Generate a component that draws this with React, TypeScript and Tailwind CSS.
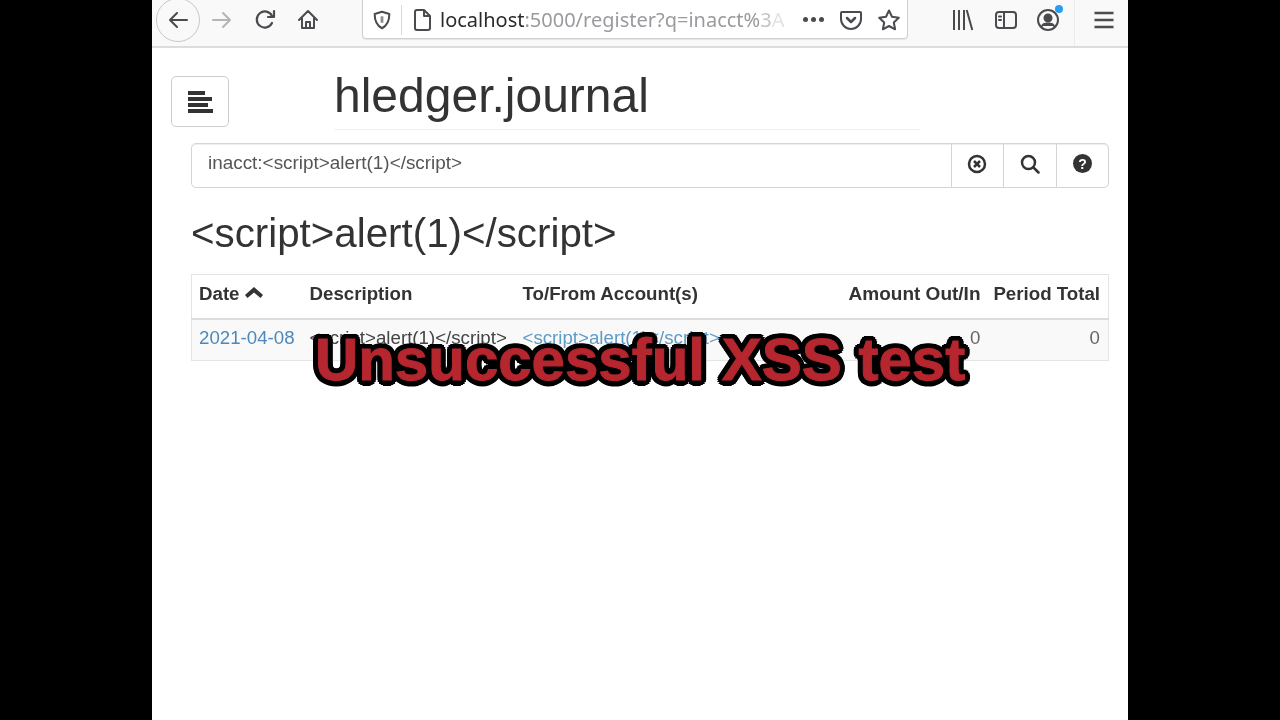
const sans = "font-['Liberation_Sans',Arial,sans-serif]";

function ToolIcon({ children, className = "" }: { children: React.ReactNode; className?: string }) {
  return (
    <svg viewBox="0 0 24 24" fill="none" stroke="currentColor" strokeWidth="2" strokeLinecap="round" strokeLinejoin="round" className={`h-6 w-6 text-[#4a4a4f] ${className}`}>
      {children}
    </svg>
  );
}

function BrowserBar() {
  return (
    <header className="flex h-12 items-start overflow-hidden border-b-2 border-[#dcdcdc] bg-[#f9f9fa]">
      {/* nav buttons */}
      <div className="ml-[4px] mt-[-2px] flex h-[44px] w-[44px] items-center justify-center rounded-full border border-[#c8c8c8]">
        <ToolIcon>
          <path d="M21 12H4M11 5l-7 7 7 7" />
        </ToolIcon>
      </div>
      <div className="ml-[10px] mt-2">
        <ToolIcon className="text-[#b5b5b8]">
          <path d="M3 12h17M13 5l7 7-7 7" />
        </ToolIcon>
      </div>
      <div className="ml-[19px] mt-2">
        <svg viewBox="0 0 24 24" fill="none" stroke="currentColor" strokeWidth="2.2" strokeLinecap="round" strokeLinejoin="round" className="h-6 w-6 text-[#4a4a4f]">
          <path d="M19 15a8 8 0 1 1 0-7" />
          <path d="M21 3v6h-6" />
        </svg>
      </div>
      <div className="ml-[19px] mt-2">
        <ToolIcon>
          <path d="M3 12l9-9 9 9M6 10v10h12V10M10 20v-6h4v6" />
        </ToolIcon>
      </div>
      {/* url bar */}
      <div className="ml-[42px] mt-[-4px] flex h-[43px] w-[546px] items-center rounded-[4px] border border-[#cfcfcf] bg-white pt-1 shadow-[0_1px_1px_rgba(0,0,0,0.08)]">
        <svg viewBox="0 0 24 24" fill="none" stroke="currentColor" strokeWidth="2.2" strokeLinejoin="round" className="ml-[8px] h-[22px] w-[22px] text-[#4a4a4f]">
          <path d="M12 3l8 2.5c0 7-2 12.5-8 15.5-6-3-8-8.500-8-15.500z" />
          <path d="M12 8v7" strokeWidth="3" className="text-[#8a8a8a]" />
        </svg>
        <div className="ml-[8px] h-[30px] w-px bg-[#d8d8d8]" />
        <svg viewBox="0 0 24 24" fill="none" stroke="currentColor" strokeWidth="2" strokeLinejoin="round" className="ml-[8px] h-6 w-6 text-[#4a4a4f]">
          <path d="M5 4a2 2 0 0 1 2-2h7l6 6v12a2 2 0 0 1-2 2H7a2 2 0 0 1-2-2z" />
          <path d="M14 2v6h6" />
        </svg>
        <div className="ml-[6px] w-[349px] whitespace-nowrap font-['Noto_Sans',sans-serif] text-[20px] leading-6">
          <span className="text-[#2a2a2e]">localhost</span>
          <span className="text-[#9a9a9f]">:5000/register?q=inacct%</span>
          <span className="text-[#c4c4c8]">3</span>
          <span className="text-[#e2e2e4]">A</span>
        </div>
        <div className="ml-[14px] flex gap-[3px]">
          <span className="h-[5px] w-[5px] rounded-full bg-[#4a4a4f]" />
          <span className="h-[5px] w-[5px] rounded-full bg-[#4a4a4f]" />
          <span className="h-[5px] w-[5px] rounded-full bg-[#4a4a4f]" />
        </div>
        <div className="ml-[15px]">
          <ToolIcon>
            <path d="M3 4h18a1 1 0 0 1 1 1v6a10 10 0 0 1-20 0V5a1 1 0 0 1 1-1z" />
            <path d="M8 10l4 4 4-4" strokeWidth="2.500" />
          </ToolIcon>
        </div>
        <div className="ml-[14px]">
          <ToolIcon>
            <path d="M12 2.500l3 6.300 6.800.9-5 4.800 1.300 6.800-6.100-3.300-6.100 3.300 1.300-6.800-5-4.800 6.800-.9z" />
          </ToolIcon>
        </div>
      </div>
      {/* right icons */}
      <div className="ml-[42px] mt-2">
        <ToolIcon>
          <path d="M4 3v18M9 3v18M14 3v18M17 3l5 18" strokeLinecap="square" />
        </ToolIcon>
      </div>
      <div className="ml-[20px] mt-2">
        <ToolIcon>
          <rect x="2" y="4" width="20" height="16" rx="3" />
          <path d="M10 4v16M5 8.500h2M5 12h2" />
        </ToolIcon>
      </div>
      <div className="relative ml-[18px] mt-2">
        <ToolIcon>
          <circle cx="12" cy="12" r="10" />
          <circle cx="12" cy="10" r="3.500" fill="currentColor" />
          <path d="M6 18c1-3.500 11-3.500 12 0" fill="currentColor" />
        </ToolIcon>
        <span className="absolute right-[-3px] top-[-3px] h-2 w-2 rounded-full bg-[#2a9df4]" />
      </div>
      <div className="ml-[14px] h-[47px] w-px bg-[#ececec]" />
      <div className="ml-[17px] mt-2">
        <ToolIcon>
          <path d="M2.500 5h19M2.500 12h19M2.500 19h19" strokeWidth="2.500" strokeLinecap="butt" />
        </ToolIcon>
      </div>
    </header>
  );
}

function PageBody() {
  return (
    <main className={`${sans} text-[18.700px] text-[#333333]`}>
      <div className="flex h-[80px] items-start">
        <button className="ml-[19px] mt-[28px] flex h-[51px] w-[58px] items-center justify-center rounded-[5px] border border-[#cccccc] bg-white">
          <svg viewBox="0 0 26 22" className="ml-[2px] h-[22px] w-[26px] fill-[#333333]">
            <rect x="0" y="0" width="17" height="4" />
            <rect x="0" y="6" width="24" height="4" />
            <rect x="0" y="12" width="20" height="4" />
            <rect x="0" y="18" width="25" height="4" />
          </svg>
        </button>
        <h1 className="ml-[105px] mt-[21px] w-[586px] border-b border-[#f2f2f2] pb-[6px] text-[48px] font-normal leading-[54px]">hledger.journal</h1>
      </div>
      <div className="mx-[39px] mt-[15px] flex h-[45px] w-[918px] overflow-hidden rounded-[5px] border border-[#d4d4d4] shadow-[inset_0_1px_1px_rgba(0,0,0,0.075)]">
        <div className="flex flex-1 items-center pb-[4px] pl-4 text-[18.900px] text-[#555555]">inacct:&lt;script&gt;alert(1)&lt;/script&gt;</div>
        <div className="flex w-[52px] items-center justify-center border-l border-[#d4d4d4] pb-[4px] pr-[2px]">
          <svg viewBox="0 0 20 20" className="h-5 w-5" fill="none" stroke="#333333">
            <circle cx="10" cy="10" r="8" strokeWidth="2.500" />
            <path d="M7 7l6 6M13 7l-6 6" strokeWidth="2.500" />
          </svg>
        </div>
        <div className="flex w-[53px] items-center justify-center border-l border-[#d4d4d4] pb-[4px]">
          <svg viewBox="0 0 20 20" className="h-5 w-5" fill="none" stroke="#333333" strokeWidth="2.500" strokeLinecap="round">
            <circle cx="8.500" cy="8.500" r="6.500" />
            <path d="M13.500 13.500l5 5" />
          </svg>
        </div>
        <div className="flex w-[52px] items-center justify-center border-l border-[#d4d4d4] pb-[4px]">
          <span className="flex h-[19px] w-[19px] items-center justify-center rounded-full bg-[#333333] text-[14px] font-bold leading-none text-white">?</span>
        </div>
      </div>
      <h2 className="ml-[39px] mt-[22px] text-[40.300px] font-normal leading-[48px]">&lt;script&gt;alert(1)&lt;/script&gt;</h2>
      <table className="ml-[39px] mt-[16px] w-[917px] table-fixed border border-[#e4e4e4]">
        <colgroup>
          <col className="w-[110px]" />
          <col className="w-[213px]" />
          <col className="w-[320px]" />
          <col className="w-[154px]" />
          <col className="w-[120px]" />
        </colgroup>
        <thead>
          <tr className="h-[44px] border-b-2 border-[#dddddd] text-left font-bold">
            <th className="pb-1 pl-[7px]">
              Date
              <svg viewBox="0 0 18 12" className="ml-[5px] inline-block h-3 w-[18px] fill-[#333333] align-[1px]">
                <path d="M9 0l9 8-2.500 3L9 5.500 2.500 11 0 8z" />
              </svg>
            </th>
            <th className="pb-1 pl-2">Description</th>
            <th className="pb-1 pl-2">To/From Account(s)</th>
            <th className="pb-1 pr-2 text-right text-[19px]">Amount Out/In</th>
            <th className="pb-1 pr-2 text-right">Period Total</th>
          </tr>
        </thead>
        <tbody>
          <tr className="h-[42px] bg-[#f9f9f9]">
            <td className="pb-[3px] pl-[7px] text-[#4c88bb]">2021-04-08</td>
            <td className="whitespace-nowrap pb-[3px] pl-2 text-[#444444]">&lt;script&gt;alert(1)&lt;/script&gt;</td>
            <td className="whitespace-nowrap pb-[3px] pl-2 text-[#5f9bc8]">&lt;script&gt;alert(1)&lt;/script&gt;</td>
            <td className="pb-[3px] pr-2 text-right text-[#666666]">0</td>
            <td className="pb-[3px] pr-2 text-right text-[#666666]">0</td>
          </tr>
        </tbody>
      </table>
    </main>
  );
}

export default function App() {
  return (
    <div className="relative flex h-[720px] w-[1280px] justify-center overflow-hidden bg-black">
      {/* the reference is a video frame, so everything under the caption is a little soft */}
      <div className="h-[720px] w-[976px] bg-white blur-[0.6px]">
        <BrowserBar />
        <PageBody />
      </div>
      {/* video caption, outline is a ring of shadows so its corners stay round */}
      <div className={`${sans} absolute inset-x-0 top-[322px] text-center text-[60px] font-bold leading-[76px] text-[#b5262f] [-webkit-text-stroke:1px_#b5262f] [text-shadow:0_-5.5px_0_#000,2.1px_-5.1px_0_#000,3.9px_-3.9px_0_#000,5.1px_-2.1px_0_#000,5.5px_0_0_#000,5.1px_2.1px_0_#000,3.9px_3.9px_0_#000,2.1px_5.1px_0_#000,0_5.5px_0_#000,-2.1px_5.1px_0_#000,-3.9px_3.9px_0_#000,-5.1px_2.1px_0_#000,-5.5px_0_0_#000,-5.1px_-2.1px_0_#000,-3.9px_-3.9px_0_#000,-2.1px_-5.1px_0_#000]`}>
        Unsuccessful XSS test
      </div>
    </div>
  );
}
